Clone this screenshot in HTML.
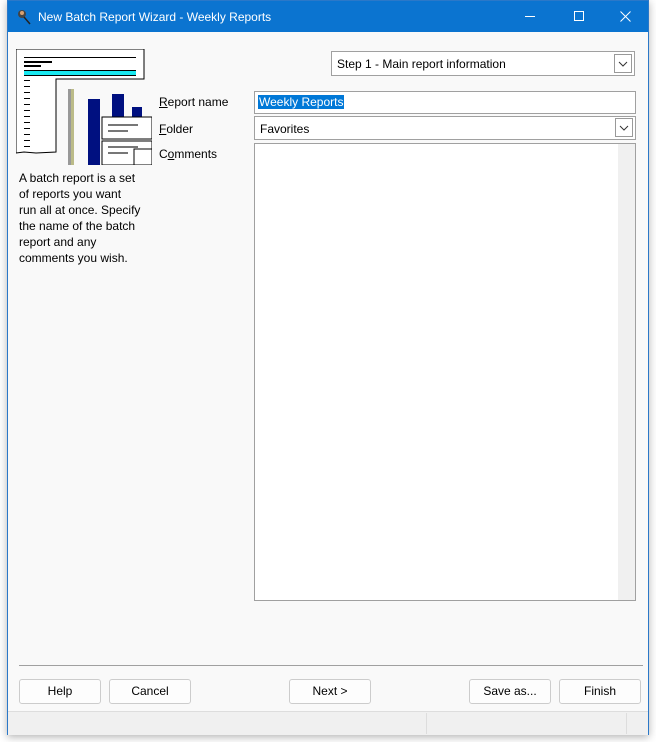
<!DOCTYPE html>
<html><head><style>
*{box-sizing:border-box;margin:0;padding:0}
body{width:656px;height:742px;background:#fff;font-family:"Liberation Sans",Tahoma,sans-serif;font-size:12px;color:#000;position:relative;overflow:hidden}
.win{position:absolute;left:7px;top:0;width:642px;height:735px;background:#f9f9f9;border:1px solid #2b78c8;box-shadow:0 2px 8px rgba(0,0,0,.3)}
.title{position:absolute;left:0;top:0;width:640px;height:31px;background:#0b74d0;color:#fff;font-size:12px}
.abs{position:absolute}
.btn{position:absolute;top:678px;height:25px;width:82px;border:1px solid #ccc;border-radius:3px;background:#fdfdfd;text-align:center;line-height:23px;font-size:12px}
.inp{position:absolute;background:#fff;border:1px solid #a0a0a0}
.dd{position:absolute;right:2px;top:2px;width:18px;height:19px;border:1px solid #999;background:#fff}
</style></head><body>
<div class="win">
 <div class="title">
  <svg class="abs" style="left:9px;top:8px" width="14" height="16"><circle cx="5" cy="5" r="4" fill="#444"/><circle cx="5" cy="4" r="2" fill="#d9a070"/><line x1="7" y1="8" x2="13" y2="15" stroke="#222" stroke-width="1.5"/></svg>
  <div class="abs" style="left:30px;top:9px">New Batch Report Wizard - Weekly Reports</div>
  <div class="abs" style="left:517px;top:15px;width:10px;height:1px;background:#fff"></div>
  <div class="abs" style="left:566px;top:10px;width:10px;height:10px;border:1px solid #fff"></div>
  <svg class="abs" style="left:612px;top:10px" width="11" height="11"><path d="M0.5,0.5L10.5,10.5M10.5,0.5L0.5,10.5" stroke="#fff" stroke-width="1"/></svg>
 </div>
 <svg class="abs" style="left:8px;top:48px" width="136" height="116">
  <path d="M0,0H128V30H40V103L20,104L8,103L0,104Z" fill="#fff" stroke="#000"/>
  <rect x="8" y="8" width="112" height="1" fill="#000"/>
  <rect x="8" y="12" width="28" height="2" fill="#000"/><rect x="8" y="16" width="17" height="2" fill="#000"/>
  <rect x="8" y="21" width="112" height="6" fill="#18e8f0"/><rect x="8" y="21" width="112" height="1" fill="#000"/><rect x="8" y="26" width="112" height="1" fill="#000"/>
  <g fill="#000"><rect x="8" y="31" width="6" height="1"/><rect x="8" y="37" width="6" height="1"/><rect x="8" y="43" width="6" height="1"/><rect x="8" y="49" width="6" height="1"/><rect x="8" y="55" width="6" height="1"/><rect x="8" y="61" width="6" height="1"/><rect x="8" y="67" width="6" height="1"/><rect x="8" y="73" width="6" height="1"/><rect x="8" y="79" width="6" height="1"/><rect x="8" y="85" width="6" height="1"/><rect x="8" y="91" width="6" height="1"/><rect x="8" y="97" width="6" height="1"/></g>
  <rect x="52" y="40" width="6" height="76" fill="#999"/><rect x="55" y="40" width="3" height="76" fill="#bb8"/>
  <rect x="72" y="50" width="12" height="66" fill="#001080"/>
  <rect x="96" y="45" width="12" height="30" fill="#001080"/>
  <rect x="116" y="58" width="10" height="20" fill="#001080"/>
  <rect x="86" y="68" width="50" height="22" fill="#fff" stroke="#000"/>
  <rect x="92" y="75" width="30" height="2" fill="#777"/><rect x="92" y="81" width="20" height="2" fill="#777"/>
  <rect x="86" y="92" width="50" height="24" fill="#fff" stroke="#000"/>
  <rect x="92" y="97" width="30" height="2" fill="#777"/><rect x="92" y="103" width="20" height="2" fill="#777"/>
  <rect x="118" y="100" width="18" height="16" fill="#fff" stroke="#000"/>
 </svg>
 <div class="abs" style="left:11px;top:169px;width:122px;line-height:16px">A batch report is a set of reports you want run all at once. Specify the name of the batch report and any comments you wish.</div>
 <div class="inp" style="left:323px;top:50px;width:304px;height:25px"><div class="abs" style="left:5px;top:5px">Step 1 - Main report information</div><div class="dd"><svg width="16" height="17"><path d="M4,7l4,4l4,-4" fill="none" stroke="#333"/></svg></div></div>
 <div class="abs" style="left:151px;top:94px"><u>R</u>eport name</div>
 <div class="abs" style="left:151px;top:121px"><u>F</u>older</div>
 <div class="abs" style="left:151px;top:146px">C<u>o</u>mments</div>
 <div class="inp" style="left:246px;top:90px;width:382px;height:23px"><span class="abs" style="left:3px;top:3px;background:#0078d7;color:#fff;padding:0 1px">Weekly Reports</span></div>
 <div class="inp" style="left:246px;top:115px;width:382px;height:24px"><div class="abs" style="left:5px;top:5px">Favorites</div><div class="dd" style="top:1px"><svg width="16" height="17"><path d="M4,7l4,4l4,-4" fill="none" stroke="#333"/></svg></div></div>
 <div class="inp" style="left:246px;top:142px;width:382px;height:458px"><div class="abs" style="right:0;top:0;width:17px;height:456px;background:#f0f0f0"></div></div>
 <div class="abs" style="left:11px;top:664px;width:624px;height:1px;background:#a0a0a0"></div>
 <div class="btn" style="left:11px">Help</div>
 <div class="btn" style="left:101px">Cancel</div>
 <div class="btn" style="left:281px">Next &gt;</div>
 <div class="btn" style="left:461px">Save as...</div>
 <div class="btn" style="left:551px">Finish</div>
 <div class="abs" style="left:0;top:710px;width:640px;height:24px;background:#f0f0f0;border-top:1px solid #ddd"></div>
 <div class="abs" style="left:418px;top:712px;width:1px;height:21px;background:#ddd"></div>
 <div class="abs" style="left:618px;top:712px;width:1px;height:21px;background:#ddd"></div>
</div>
</body></html>
